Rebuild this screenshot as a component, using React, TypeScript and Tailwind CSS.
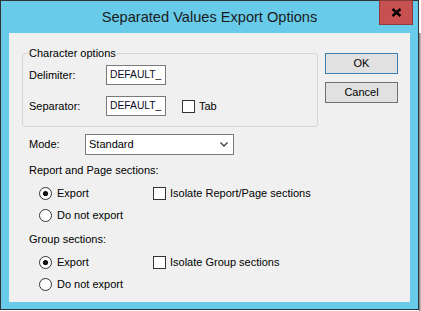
import React from "react";

function Radio({ checked }: { checked?: boolean }) {
  return (
    <svg width="13" height="13" viewBox="0 0 13 13" className="shrink-0">
      <circle cx="6.5" cy="6.5" r="6" fill="#ffffff" stroke="#333333" strokeWidth="1" />
      {checked && <circle cx="6.5" cy="6.5" r="2.6" fill="#111111" />}
    </svg>
  );
}

function Check() {
  return <div className="w-[13px] h-[13px] shrink-0 border border-[#333333] bg-white" />;
}

function RadioRow({ label, checked, extra }: { label: string; checked?: boolean; extra?: string }) {
  return (
    <div className="h-[22px] flex items-center pl-[10px]">
      <div className="w-[114px] flex items-center gap-[5px]">
        <Radio checked={checked} />
        <span>{label}</span>
      </div>
      {extra && (
        <div className="flex items-center gap-[4px]">
          <Check />
          <span>{extra}</span>
        </div>
      )}
    </div>
  );
}

export default function App() {
  return (
    <div className="w-[421px] h-[311px] bg-white flex overflow-hidden font-['Liberation_Sans',Arial,sans-serif] text-[11px] text-black">
      <div className="w-[419px] h-[310px] shrink-0 border border-[#2e3338] bg-[#69cbea] flex flex-col relative">
        {/* title bar */}
        <div className="h-[32px] flex items-center justify-center text-[14.6px] text-[#1b1b1b] pt-[2px]">
          Separated Values Export Options
        </div>
        <div className="absolute right-[5px] -top-px w-[34px] h-[25px] bg-[#c75050] border border-[#8c3a3a] flex items-center justify-center">
          <svg width="11" height="9" viewBox="0 0 11 9">
            <path d="M1.5 1 L9.5 8 M9.5 1 L1.5 8" stroke="#000" strokeWidth="2.4" strokeLinecap="butt" />
          </svg>
        </div>
        {/* client */}
        <div className="flex-1 px-[8px] pb-[7px] flex">
          <div className="flex-1 bg-[#f0f0f0] flex flex-col">
            <div className="pt-[20px] pl-[13px] flex gap-[7px]">
              <div className="relative w-[296px] h-[74px] border border-[#d5d5d5] rounded-[3px] pt-[11px] pl-[6px] flex flex-col gap-[11px]">
                <span className="absolute left-[5px] -top-[8px] leading-[14px] px-[1px] bg-[#f0f0f0]">
                  Character options
                </span>
                <div className="flex items-center h-[20px]">
                  <span className="w-[77px]">Delimiter:</span>
                  <div className="w-[60px] h-[20px] border border-[#7a7a7a] bg-white flex items-center pl-[3px] overflow-hidden whitespace-nowrap text-[10.3px] text-[#0a0a28]">
                    DEFAULT_
                  </div>
                </div>
                <div className="flex items-center h-[20px]">
                  <span className="w-[77px]">Separator:</span>
                  <div className="w-[60px] h-[20px] border border-[#7a7a7a] bg-white flex items-center pl-[3px] overflow-hidden whitespace-nowrap text-[10.3px] text-[#0a0a28]">
                    DEFAULT_
                  </div>
                  <div className="ml-[16px] flex items-center gap-[4px]">
                    <Check />
                    <span>Tab</span>
                  </div>
                </div>
              </div>
              <div className="flex flex-col gap-[8px]">
                <div className="w-[73px] h-[21px] bg-[#e1e1e1] border border-[#3c7fb1] flex items-center justify-center">
                  OK
                </div>
                <div className="w-[73px] h-[21px] bg-[#e1e1e1] border border-[#707070] flex items-center justify-center">
                  Cancel
                </div>
              </div>
            </div>
            <div className="pl-[20px] flex flex-col">
              <div className="mt-[7px] h-[21px] flex items-center">
                <span className="w-[56px]">Mode:</span>
                <div className="w-[149px] h-[21px] border border-[#7a7a7a] bg-white flex items-center justify-between pl-[3px] pr-[5px]">
                  <span>Standard</span>
                  <svg width="8" height="5" viewBox="0 0 8 5">
                    <path d="M0.5 0.5 L4 4 L7.5 0.5" fill="none" stroke="#404040" strokeWidth="1.4" />
                  </svg>
                </div>
              </div>
              <div className="mt-[4px] h-[22px] flex items-center">Report and Page sections:</div>
              <div className="mt-[1px]">
                <RadioRow label="Export" checked extra="Isolate Report/Page sections" />
                <RadioRow label="Do not export" />
              </div>
              <div className="mt-[2px] h-[22px] flex items-center">Group sections:</div>
              <div className="mt-[1px]">
                <RadioRow label="Export" checked extra="Isolate Group sections" />
                <RadioRow label="Do not export" />
              </div>
            </div>
          </div>
        </div>
      </div>
      <div className="flex-1 flex flex-col">
        <div className="h-[33px] bg-white" />
        <div className="flex-1 bg-[#b4b4b4] border-l border-[#8a8a8a]" />
      </div>
    </div>
  );
}
